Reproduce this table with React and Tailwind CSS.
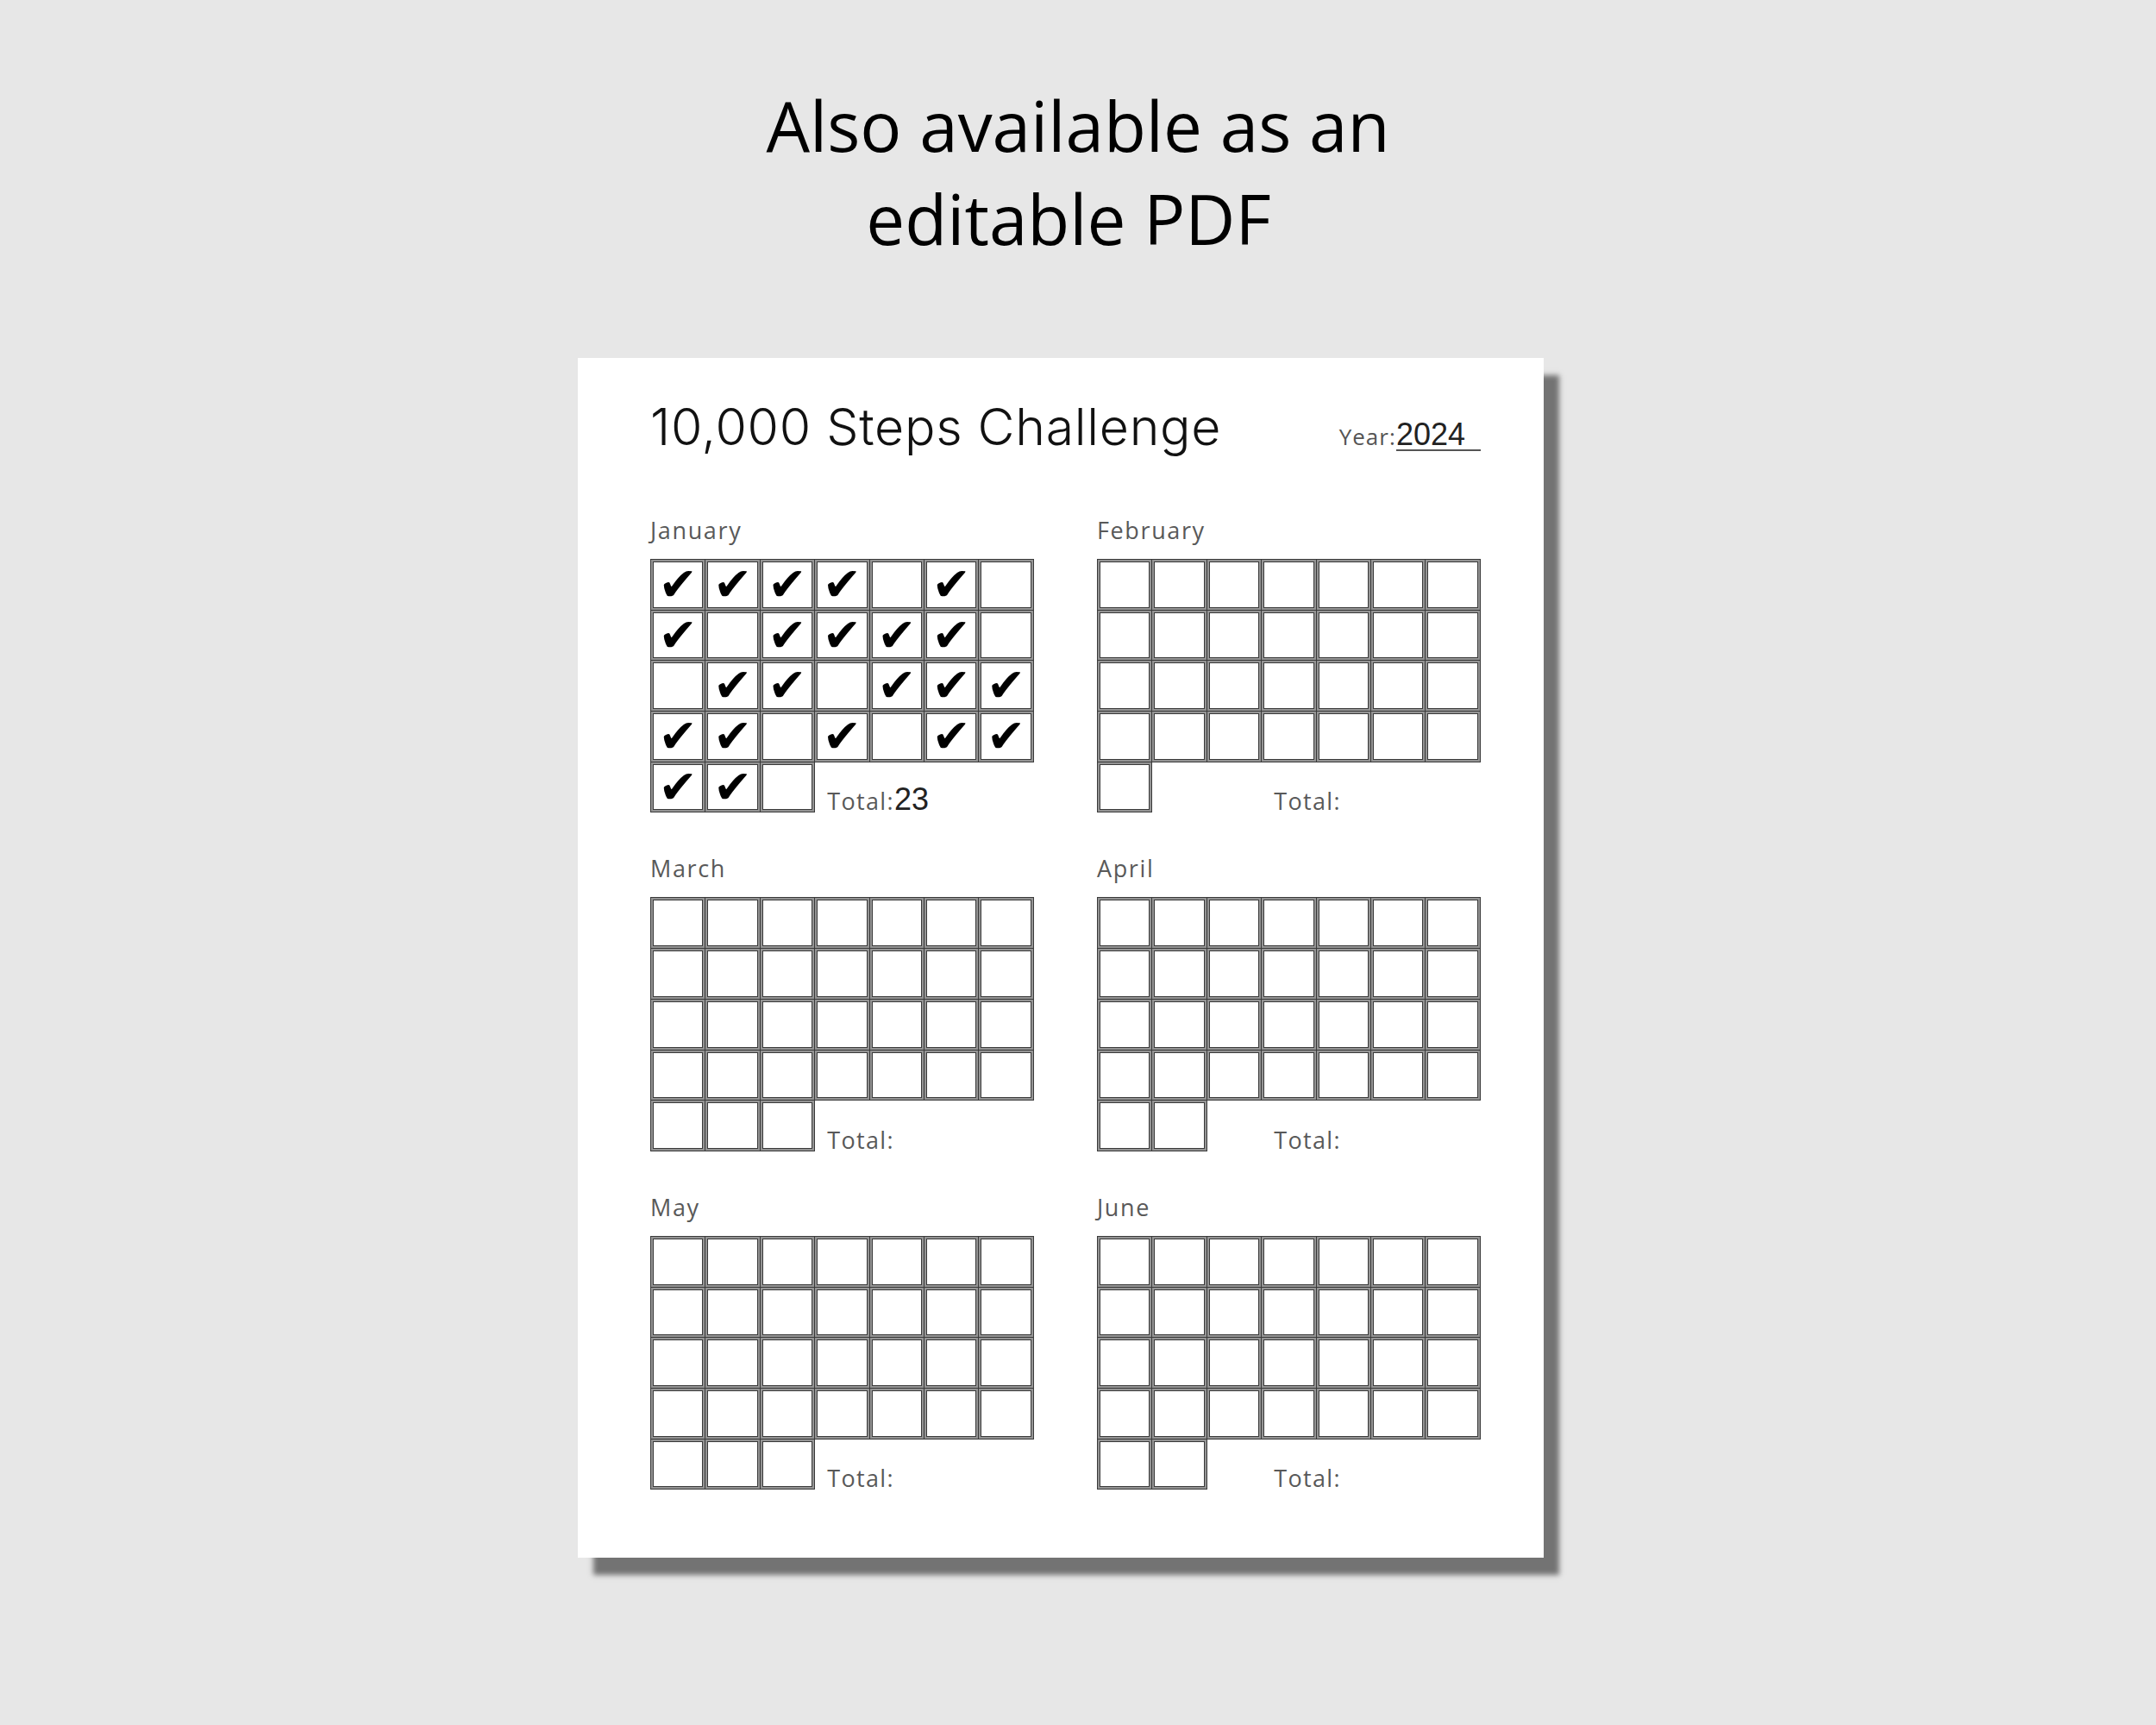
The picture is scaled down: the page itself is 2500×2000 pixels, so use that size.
import React from "react";

const months = [
  {
    name: "January",
    days: 31,
    checks: [
      1, 1, 1, 1, 0, 1, 0,
      1, 0, 1, 1, 1, 1, 0,
      0, 1, 1, 0, 1, 1, 1,
      1, 1, 0, 1, 0, 1, 1,
      1, 1, 0,
    ],
    total: "23",
  },
  { name: "February", days: 29 },
  { name: "March", days: 31 },
  { name: "April", days: 30 },
  { name: "May", days: 31 },
  { name: "June", days: 30 },
];

function Cell({ checked }) {
  return (
    <div className="border-r border-b border-[#3a3a3a] bg-[#949494] p-[2px]">
      <div className="flex h-full items-center justify-center border border-[#3a3a3a] bg-white">
        {checked ? (
          <span className="font-['DejaVu_Sans',sans-serif] text-[54px] leading-none text-black">
            ✔
          </span>
        ) : null}
      </div>
    </div>
  );
}

function Month({ m }) {
  const cells = [];
  for (let i = 0; i < m.days; i++) {
    cells.push(<Cell key={i} checked={m.checks ? m.checks[i] === 1 : false} />);
  }
  return (
    <div>
      <div className="h-[32px] font-['Open_Sans',sans-serif] text-[27px] leading-[32px] tracking-[0.06em] text-[#595959]">
        {m.name}
      </div>
      <div className="mt-[17px] grid grid-cols-[repeat(7,63.4px)] grid-rows-[repeat(5,58.7px)] border-l border-t border-[#3a3a3a]">
        {cells}
        <div className="col-span-4 col-start-4 row-start-5 -mb-[3px] flex items-baseline self-end pl-[14px]">
          <span className="font-['Open_Sans',sans-serif] text-[27px] leading-[32px] tracking-[0.05em] text-[#595959]">
            Total:
          </span>
          {m.total ? (
            <span className="font-['Liberation_Sans',sans-serif] text-[36px] leading-[32px] text-[#222]">
              {m.total}
            </span>
          ) : null}
        </div>
      </div>
    </div>
  );
}

export default function App() {
  return (
    <div className="min-h-[2000px] w-[2500px] bg-[#e7e7e7] pt-[91px]">
      <div className="text-center font-['Open_Sans',sans-serif] text-[80px] leading-[108px] text-black">
        <div>Also available as an</div>
        <div className="pr-[22px]">editable PDF</div>
      </div>
      <div className="ml-[670px] mt-[108px] h-[1391px] w-[1120px] bg-white pl-[84px] pt-[51px] shadow-[18px_20px_6px_#737373]">
        <div className="flex w-[963px] items-baseline justify-between">
          <div className="font-['Inter',sans-serif] text-[59px] font-light leading-[58px] tracking-[0.012em] text-[#111]">
            10,000 Steps Challenge
          </div>
          <div className="flex items-baseline">
            <span className="font-['Open_Sans',sans-serif] text-[26px] leading-[32px] tracking-[0.04em] text-[#555]">
              Year:
            </span>
            <span className="inline-block border-b-2 border-[#555] pr-[18px] font-['Liberation_Sans',sans-serif] text-[36px] leading-[34px] text-[#222]">
              2024
            </span>
          </div>
        </div>
        <div className="mt-[75px] grid grid-cols-[445px_445px] gap-x-[73px] gap-y-[49px]">
          {months.map((m) => (
            <Month key={m.name} m={m} />
          ))}
        </div>
      </div>
    </div>
  );
}
